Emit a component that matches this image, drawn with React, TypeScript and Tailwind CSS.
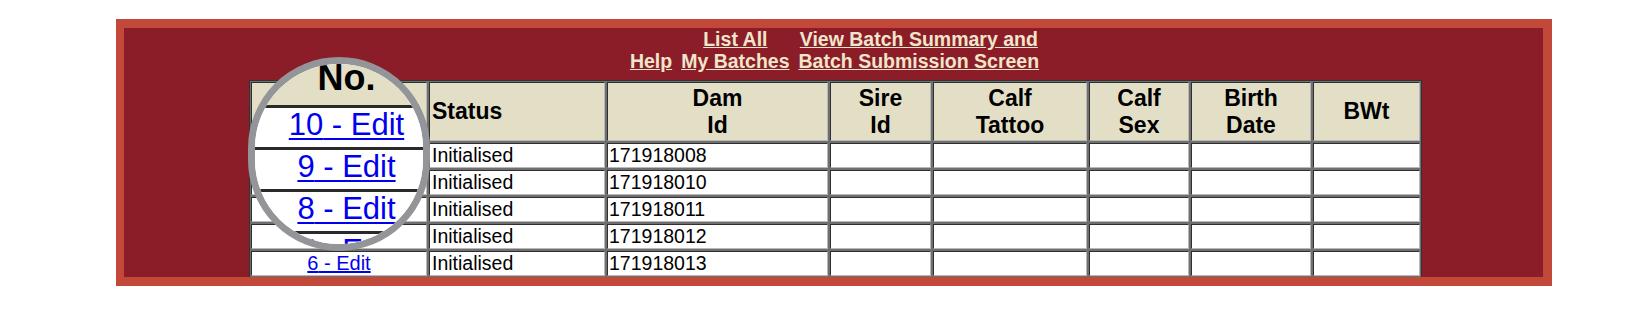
import React from "react";

const font = "font-['Liberation_Sans',Arial,Helvetica,sans-serif]";
const cols = "grid grid-cols-[176px_176px_221px_101px_154px_100px_120px_107px] gap-[2px]";
const cell =
  "border border-t-[#2f2f2f] border-l-[#2f2f2f] border-b-[#b8b8b8] border-r-[#b8b8b8]";

type Row = { n: number; dam: string; hidden?: boolean; filler?: boolean };

const rows: Row[] = [
  { n: 10, dam: "171918008", hidden: true },
  { n: 9, dam: "171918010", hidden: true },
  { n: 8, dam: "171918011", hidden: true },
  { n: 7, dam: "171918012", hidden: true },
  { n: 6, dam: "171918013" },
  { n: 5, dam: "", filler: true },
];

function Head({ lines, left }: { lines: string[]; left?: boolean }) {
  return (
    <div
      className={`${cell} bg-[#e3dfc6] h-[59px] flex flex-col justify-center ${
        left ? "items-start pl-[2px]" : "items-center"
      } text-[23px] font-bold leading-[27px] text-black`}
    >
      {lines.map((l) => (
        <span key={l}>{l}</span>
      ))}
    </div>
  );
}

function Magnifier() {
  const link =
    "text-[31px] leading-[34px] text-[#0000ee] underline decoration-[2px] underline-offset-[3px]";
  return (
    <div className="absolute left-[124px] top-[29px] w-[182px] h-[194px] rounded-full border-[7px] border-[#939598] overflow-hidden bg-white">
      <div className="flex flex-col w-full">
        <div className="h-[41px] bg-[#e3dfc6] flex justify-center pl-[15px]">
          <span className="text-[36px] leading-[36px] font-bold -mt-[4px] text-black">No.</span>
        </div>
        {[10, 9, 8, 7].map((n) => (
          <div
            key={n}
            className="h-[42px] border-t-[3px] border-[#2a2a2a] flex justify-center pl-[15px] bg-white"
          >
            <span className={link}>{n} - Edit</span>
          </div>
        ))}
      </div>
    </div>
  );
}

export default function App() {
  const linkCls = "underline text-[#efe6cb] font-bold";
  return (
    <div className={`${font} w-[1634px] h-[314px] bg-white pt-[19px] overflow-hidden`}>
      <div className="relative ml-[116px] w-[1436px] h-[267px] border-[9px] border-l-[8px] border-[#c2483a] bg-[#8b1d29] overflow-hidden">
        <div className="flex justify-center items-end gap-[9px] text-[19.5px] leading-[22px] pl-[2px]">
          <a className={linkCls}>Help</a>
          <div className="flex flex-col items-center">
            <a className={linkCls}>List All</a>
            <a className={linkCls}>My Batches</a>
          </div>
          <div className="flex flex-col items-center">
            <a className={linkCls}>View Batch Summary and</a>
            <a className={linkCls}>Batch Submission Screen</a>
          </div>
        </div>

        <div className={`ml-[125px] mt-[8px] w-[1173px] border border-[#333333] bg-[#6f6f6f] p-[1px] ${cols}`}>
          <Head lines={[""]} />
          <Head lines={["Status"]} left />
          <Head lines={["Dam", "Id"]} />
          <Head lines={["Sire", "Id"]} />
          <Head lines={["Calf", "Tattoo"]} />
          <Head lines={["Calf", "Sex"]} />
          <Head lines={["Birth", "Date"]} />
          <Head lines={["BWt"]} />
          {rows.map((r) => (
            <React.Fragment key={r.n}>
              <div className={`${cell} bg-white h-[25px] flex items-center justify-center`}>
                {!r.hidden && !r.filler && (
                  <a className="text-[20px] leading-[23px] text-[#0000ee] underline">{r.n} - Edit</a>
                )}
              </div>
              <div className={`${cell} bg-white h-[25px] flex items-center pl-[2px] text-[19.5px] leading-[23px] text-black`}>
                {!r.filler && "Initialised"}
              </div>
              <div className={`${cell} bg-white h-[25px] flex items-center pl-[1px] text-[19.5px] leading-[23px] text-black`}>
                {r.dam}
              </div>
              <div className={`${cell} bg-white h-[25px]`} />
              <div className={`${cell} bg-white h-[25px]`} />
              <div className={`${cell} bg-white h-[25px]`} />
              <div className={`${cell} bg-white h-[25px]`} />
              <div className={`${cell} bg-white h-[25px]`} />
            </React.Fragment>
          ))}
        </div>

        <Magnifier />
      </div>
    </div>
  );
}
